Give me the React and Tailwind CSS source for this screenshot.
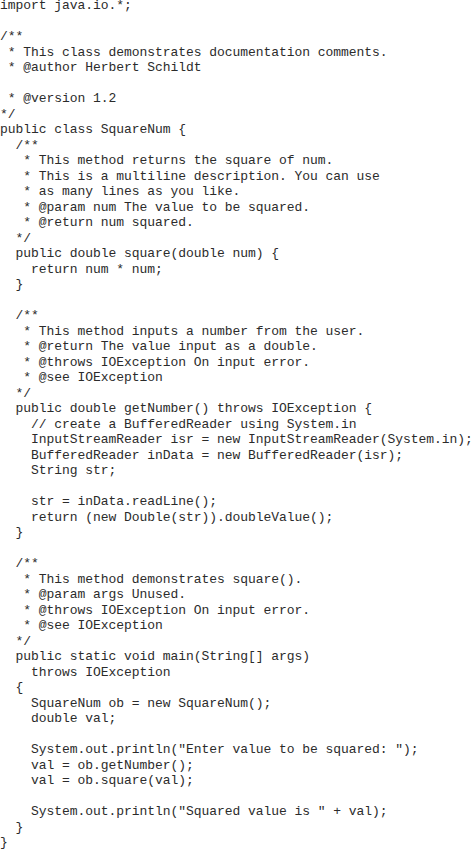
import React from 'react';

const code = `import java.io.*;

/**
 * This class demonstrates documentation comments.
 * @author Herbert Schildt

 * @version 1.2
*/
public class SquareNum {
  /**
   * This method returns the square of num.
   * This is a multiline description. You can use
   * as many lines as you like.
   * @param num The value to be squared.
   * @return num squared.
  */
  public double square(double num) {
    return num * num;
  }

  /**
   * This method inputs a number from the user.
   * @return The value input as a double.
   * @throws IOException On input error.
   * @see IOException
  */
  public double getNumber() throws IOException {
    // create a BufferedReader using System.in
    InputStreamReader isr = new InputStreamReader(System.in);
    BufferedReader inData = new BufferedReader(isr);
    String str;

    str = inData.readLine();
    return (new Double(str)).doubleValue();
  }

  /**
   * This method demonstrates square().
   * @param args Unused.
   * @throws IOException On input error.
   * @see IOException
  */
  public static void main(String[] args)
    throws IOException
  {
    SquareNum ob = new SquareNum();
    double val;

    System.out.println("Enter value to be squared: ");
    val = ob.getNumber();
    val = ob.square(val);

    System.out.println("Squared value is " + val);
  }
}`;

export default function App() {
    return (
        <div className="w-[474px] h-[851px] bg-white overflow-hidden">
            <pre className="mt-[-2px] font-['Liberation_Mono',monospace] text-[13px] tracking-[-0.05px] leading-[15.5px] text-[#2b2b2b] whitespace-pre">
                {code}
            </pre>
        </div>
    );
}
